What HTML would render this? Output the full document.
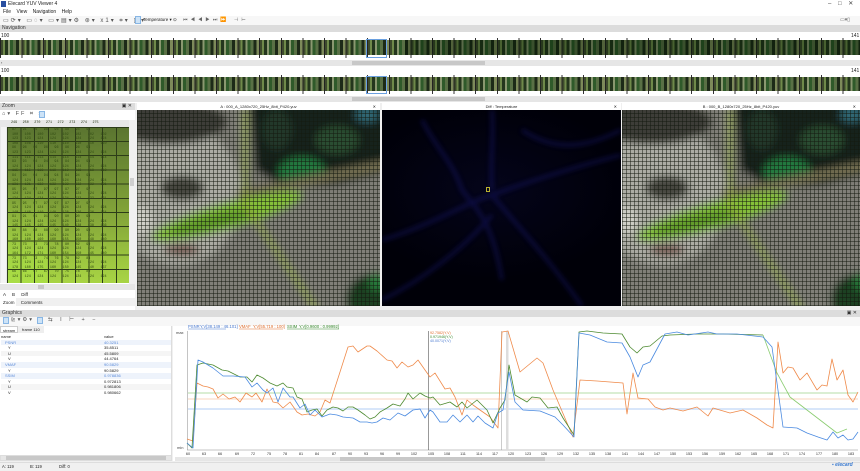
<!DOCTYPE html>
<html><head><meta charset="utf-8"><style>
*{margin:0;padding:0;box-sizing:border-box}
body{width:860px;height:471px;overflow:hidden;background:#f0f0f0;font-family:"Liberation Sans",sans-serif;font-size:5px;color:#222;position:relative}
.a{position:absolute}
.hdr{background:#dcdcdc;color:#333;font-size:5px;line-height:7px;padding-left:2px}
.film{background:
 repeating-linear-gradient(90deg,#222 0 1px,transparent 1px 21.6px),
 repeating-linear-gradient(90deg,#3d4a2c 0 3px,#6f8a4a 3px 5px,#24361d 5px 8px,#8a9870 8px 10px,#2f5a2a 10px 13px,#597045 13px 16px,#1d2a18 16px 19px,#7d8a5a 19px 21.6px)}
.sb{background:#e6e6e6}
.thumb{background:#c8c8c8}
.grid{background-image:repeating-linear-gradient(90deg,rgba(20,25,15,.5) 0 1px,transparent 1px 4px),repeating-linear-gradient(0deg,rgba(20,25,15,.5) 0 1px,transparent 1px 4px)}
.tbl{font-size:3.4px;line-height:4.6px;color:#203010;white-space:pre;font-family:"Liberation Mono",monospace}
</style></head><body>
<svg width="0" height="0" style="position:absolute"><defs>
<filter id="bl" x="-10%" y="-10%" width="120%" height="120%"><feGaussianBlur stdDeviation="4"/></filter>
<filter id="bl2"><feGaussianBlur stdDeviation="2.5"/></filter>
<g id="scene">
<rect x="-20" y="-20" width="290" height="240" fill="#807f78"/>
<ellipse cx="40" cy="85" rx="65" ry="70" fill="#acaca4"/>
<ellipse cx="30" cy="12" rx="60" ry="22" fill="#3e3e38"/>
<ellipse cx="45" cy="78" rx="22" ry="12" fill="#46463f"/>
<ellipse cx="45" cy="140" rx="18" ry="6" fill="#7a5e56"/>
<ellipse cx="5" cy="110" rx="10" ry="14" fill="#d0d0c8"/>
<polygon points="112,-10 260,-10 260,60 200,75 150,78 118,60" fill="#16241a"/>
<ellipse cx="165" cy="62" rx="24" ry="15" fill="#247a40"/>
<ellipse cx="200" cy="30" rx="22" ry="14" fill="#294e33"/>
<ellipse cx="230" cy="5" rx="12" ry="7" fill="#336a78"/>
<ellipse cx="140" cy="20" rx="15" ry="20" fill="#22382a"/>
<line x1="100" y1="85" x2="250" y2="55" stroke="#7a7456" stroke-width="10"/>
<ellipse cx="90" cy="106" rx="78" ry="13" fill="#84c038" transform="rotate(-16 90 106)"/>
<ellipse cx="75" cy="112" rx="45" ry="7" fill="#5f9a2c" transform="rotate(-14 75 112)"/>
<path d="M108 0 L108 95 L180 200" stroke="#98ae3c" stroke-width="4" fill="none"/>
<ellipse cx="235" cy="190" rx="26" ry="26" fill="#1a4024"/>
<ellipse cx="240" cy="172" rx="9" ry="9" fill="#287a3a"/>
</g></defs></svg>
<!-- title -->
<div class="a" style="left:0;top:0;width:860px;height:8px;background:#fff"></div>
<div class="a" style="left:1px;top:1px;width:5px;height:6px;background:#2a4fa0"></div>
<div class="a" style="left:8px;top:1px;font-size:5px">Elecard YUV Viewer 4</div>
<div class="a" style="left:828px;top:0;font-size:6px;color:#444">–&nbsp;&nbsp;&nbsp;&nbsp;□&nbsp;&nbsp;&nbsp;&nbsp;✕</div>
<div class="a" style="left:0;top:8px;width:860px;height:8px;background:#fff"></div>
<div class="a" style="left:3px;top:9px;font-size:5px;word-spacing:4px">File View Navigation Help</div>
<!-- toolbar -->
<div class="a" style="left:0;top:16px;width:860px;height:9px;background:#f7f7f7"></div>
<div class="a" style="left:3px;top:17px;font-size:6px;color:#555;letter-spacing:2px">▭⟳▾ ▭◌▾ ▭▾▤▾⚙ ⊛▾ x1▾ ⌗▾ ◫▾</div>
<div class="a" style="left:135px;top:16px;width:6px;height:8px;background:#cde3f7;border:1px solid #88b6e4"></div>
<div class="a" style="left:143px;top:17px;font-size:4.5px">Temperature ▾ ⊙</div>
<div class="a" style="left:183px;top:17px;font-size:5px;color:#666;letter-spacing:3px">⏮◀◀▶⏭⏩ ⊣⊢</div>
<div class="a" style="left:840px;top:17px;font-size:5px;color:#666">▭▾▯</div>
<!-- navigation -->
<div class="a hdr" style="left:0;top:25px;width:860px;height:7px">Navigation</div>
<div class="a" style="left:0;top:32px;width:860px;height:71px;background:#fff"></div>
<div class="a" style="left:1px;top:33px">100</div><div class="a" style="left:851px;top:33px">141</div>
<div class="a film" style="left:0;top:40px;width:860px;height:15px"></div>
<div class="a" style="left:0;top:38px;width:860px;height:2px;background:repeating-linear-gradient(90deg,#333 0 1px,#fff 1px 21.6px)"></div>
<div class="a" style="left:0;top:55px;width:860px;height:3px;background:repeating-linear-gradient(90deg,#333 0 1px,#fff 1px 21.6px)"></div>
<div class="a" style="left:405px;top:40px;width:455px;height:15px;background:rgba(0,20,0,.35)"></div>
<div class="a" style="left:366px;top:39px;width:21px;height:19px;border:1px solid #6aa0e0"></div>
<div class="a sb" style="left:0;top:60px;width:860px;height:6px"></div>
<div class="a thumb" style="left:352px;top:61px;width:133px;height:4px"></div>
<div class="a" style="left:1px;top:60px;font-size:4px">‹</div>
<div class="a" style="left:1px;top:68px">100</div><div class="a" style="left:851px;top:68px">141</div>
<div class="a film" style="left:0;top:77px;width:860px;height:14px"></div>
<div class="a" style="left:0;top:75px;width:860px;height:2px;background:repeating-linear-gradient(90deg,#333 0 1px,#fff 1px 21.6px)"></div>
<div class="a" style="left:0;top:91px;width:860px;height:3px;background:repeating-linear-gradient(90deg,#333 0 1px,#fff 1px 21.6px)"></div>
<div class="a" style="left:366px;top:76px;width:21px;height:18px;border:1px solid #6aa0e0"></div>
<div class="a sb" style="left:0;top:96px;width:860px;height:6px"></div>
<div class="a thumb" style="left:352px;top:97px;width:133px;height:4px"></div>
<!-- zoom panel -->
<div class="a hdr" style="left:0;top:103px;width:135px;height:7px">Zoom<span style="position:absolute;right:3px">▣ ✕</span></div>
<div class="a" style="left:0;top:110px;width:135px;height:200px;background:#fff"></div>
<div class="a" style="left:2px;top:111px;font-size:5.5px;color:#555;letter-spacing:2px">⌂▾ FF ⌗ ⇆</div>
<div class="a" style="left:39px;top:111px;width:6px;height:7px;background:#cde3f7;border:1px solid #88b6e4"></div>
<div class="a" style="left:0;top:120px;width:130px;height:163px;background:#e8e8e8"></div>
<div class="a" style="left:7px;top:127px;width:122px;height:156px;background:linear-gradient(180deg,#5a7430 0%,#6f8e34 30%,#86a83a 60%,#9cc640 85%,#a8d444 100%)"></div>
<div class="a" style="left:7px;top:183px;width:40px;height:100px;background:linear-gradient(180deg,rgba(170,220,70,0) 0%,rgba(170,225,70,.7) 100%)"></div>
<div class="a" style="left:7px;top:127px;width:122px;height:156px;background-image:repeating-linear-gradient(90deg,#2d3d18 0 1px,transparent 1px 13.6px),repeating-linear-gradient(0deg,transparent 0 13.2px,#2d3d18 13.2px 14.2px)"></div>
<div class="a tbl" style="left:11px;top:121px;word-spacing:3.5px">249 250 270 271 272 273 274 275</div>
<div class="a tbl" style="left:12px;top:128px;color:#304a12;word-spacing:4.5px">87 91 96 98 96 98 94 93
100 100 100 102 102 102 102 102
123 123 124 124 124 124 124 124
108 108 110 110 110 110 110 110
96 96 96 96 96 96 96 96
123 123 124 124 124 124 124 124
111 111 113 114 114 114 114 114
93 93 94 94 94 94 94 94
124 124 124 124 124 124 124 124
115 115 118 118 118 118 118 118
94 94 94 94 94 94 94 94
124 124 124 124 124 124 124 124
131 131 132 132 132 132 132 131
95 95 97 97 97 97 97 97
124 124 124 124 124 124 124 124
134 134 134 134 134 133 133 131
95 95 97 97 97 97 97 97
124 124 124 124 124 124 124 124
140 140 140 140 138 136 136 134
91 91 91 91 90 90 90 90
124 124 124 124 124 124 124 124
145 145 145 145 140 138 138 136
88 88 88 88 90 90 90 90
124 124 124 124 124 124 124 124
160 160 160 160 155 150 148 140
73 73 73 73 78 80 82 90
124 124 124 124 124 124 124 124
164 172 171 160 154 150 145 140
73 73 73 74 76 78 82 88
124 124 124 124 124 124 124 124
178 180 175 160 150 145 140 137
66 66 67 67 70 75 78 80
124 124 124 124 124 124 124 124</div>
<div class="a" style="left:1px;top:127px;width:5px;height:156px;background:#f4f4f4"></div>
<div class="a" style="left:129px;top:120px;width:6px;height:164px;background:#f0f0f0"></div>
<div class="a" style="left:130px;top:178px;width:4px;height:8px;background:#cfcfcf"></div>
<div class="a sb" style="left:0;top:284px;width:135px;height:6px"></div>
<div class="a thumb" style="left:38px;top:285px;width:6px;height:4px"></div>
<div class="a" style="left:3px;top:292px;font-size:4.5px;word-spacing:5px">A B Diff</div>
<div class="a" style="left:0;top:298px;width:135px;height:8px;background:#f0f0f0"></div>
<div class="a" style="left:0;top:298px;width:16px;height:8px;background:#fff"></div>
<div class="a" style="left:3px;top:300px;font-size:4.5px">Zoom&nbsp;&nbsp;&nbsp;&nbsp;&nbsp;Comments</div>
<!-- view A -->
<div class="a" style="left:137px;top:103px;width:243px;height:7px;background:#fff;text-align:center;font-size:4px;line-height:7px">A : 000_A_1280x720_25Hz_8bit_P420.yuv<span style="position:absolute;right:4px">✕</span></div>
<div class="a" style="left:137px;top:110px;width:243px;height:196px;overflow:hidden">
<svg width="243" height="196"><g filter="url(#bl)"><use href="#scene"/></g></svg>
<div class="a grid" style="left:0;top:0;width:243px;height:196px"></div>
</div>
<!-- diff -->
<div class="a" style="left:382px;top:103px;width:239px;height:7px;background:#fff;text-align:center;font-size:4px;line-height:7px">Diff : Temperature<span style="position:absolute;right:4px">✕</span></div>
<div class="a" style="left:382px;top:110px;width:239px;height:196px;overflow:hidden;background:radial-gradient(ellipse 140px 90px at 110px 80px,#04041a 0,#000008 100%)">
<svg width="239" height="196" style="position:absolute;left:0;top:0">
<g fill="none" stroke="#1a1a88" stroke-width="4" opacity=".35" filter="url(#bl2)">
<path d="M40 10 C55 40 70 50 80 80 C95 100 110 110 120 170"/>
<path d="M0 130 C50 115 90 90 110 85 C150 70 200 55 239 45"/>
<path d="M110 85 C130 110 160 140 200 196"/>
<path d="M0 190 C40 170 80 140 110 105"/>
<path d="M110 0 C112 30 108 50 110 80"/>
<path d="M140 20 C170 40 200 40 239 20"/>
</g></svg>
<div class="a" style="left:104px;top:77px;width:4px;height:5px;border:1px solid #b8b030"></div>
</div>
<!-- view B -->
<div class="a" style="left:622px;top:103px;width:238px;height:7px;background:#fff;text-align:center;font-size:4px;line-height:7px">B : 000_B_1280x720_25Hz_8bit_P420.yuv<span style="position:absolute;right:4px">✕</span></div>
<div class="a" style="left:622px;top:110px;width:238px;height:196px;overflow:hidden">
<svg width="238" height="196"><g filter="url(#bl)"><use href="#scene"/></g></svg>
<div class="a grid" style="left:0;top:0;width:238px;height:196px"></div>
</div>
<!-- graphics -->
<div class="a hdr" style="left:0;top:310px;width:860px;height:7px">Graphics<span style="position:absolute;right:3px">▣ ✕</span></div>
<div class="a" style="left:0;top:317px;width:860px;height:9px;background:#f7f7f7"></div>
<div class="a" style="left:3px;top:317px;width:6px;height:7px;background:#cde3f7;border:1px solid #88b6e4"></div>
<div class="a" style="left:11px;top:317px;font-size:5.5px;color:#555;letter-spacing:2px">⊵▾⚙▾</div>
<div class="a" style="left:37px;top:317px;width:6px;height:7px;background:#cde3f7;border:1px solid #88b6e4"></div>
<div class="a" style="left:48px;top:317px;font-size:5.5px;color:#555;letter-spacing:3px">⇆ I ⊢ + −</div>
<!-- left list -->
<div class="a" style="left:0;top:326px;width:172px;height:135px;background:#fff;border-right:1px solid #ddd"></div>
<div class="a" style="left:0;top:326px;width:18px;height:7px;background:#fff;border:1px solid #ccc;font-size:4px;padding:1px 2px">stream</div>
<div class="a" style="left:18px;top:326px;width:26px;height:7px;background:#eee;font-size:4px;padding:1px 4px">frame 110</div>
<div class="a" style="left:1px;top:334px;width:170px;height:110px;font-size:4px;line-height:5.6px">
<div style="position:relative;height:5.6px">name<span class="a" style="left:103px">value</span></div>
<div style="position:relative;height:5.6px;color:#5a8ad8;background:#eef3fb;padding-left:4px">PSNR<span class="a" style="left:103px">40.3251</span></div>
<div style="position:relative;height:5.6px;padding-left:7px">Y<span class="a" style="left:103px">35.8511</span></div>
<div style="position:relative;height:5.6px;padding-left:7px;background:#f5f5f5">U<span class="a" style="left:103px">45.5809</span></div>
<div style="position:relative;height:5.6px;padding-left:7px">V<span class="a" style="left:103px">44.4764</span></div>
<div style="position:relative;height:5.6px;color:#5a8ad8;background:#eef3fb;padding-left:4px">VMAF<span class="a" style="left:103px">90.5829</span></div>
<div style="position:relative;height:5.6px;padding-left:7px">Y<span class="a" style="left:103px">90.5829</span></div>
<div style="position:relative;height:5.6px;color:#5a8ad8;background:#eef3fb;padding-left:4px">SSIM<span class="a" style="left:103px">0.978836</span></div>
<div style="position:relative;height:5.6px;padding-left:7px">Y<span class="a" style="left:103px">0.972813</span></div>
<div style="position:relative;height:5.6px;padding-left:7px;background:#f5f5f5">U<span class="a" style="left:103px">0.981806</span></div>
<div style="position:relative;height:5.6px;padding-left:7px">V<span class="a" style="left:103px">0.980662</span></div>
</div>
<div class="a sb" style="left:0;top:455px;width:172px;height:6px;border:1px solid #ddd"></div>
<div class="a thumb" style="left:6px;top:456px;width:160px;height:4px"></div>
<!-- chart -->
<div class="a" style="left:173px;top:326px;width:687px;height:135px;background:#fff"></div>
<svg class="a" style="left:0;top:0" width="860" height="471">
<g font-family="Liberation Sans" font-size="4.2">
<text x="188" y="328" fill="#4a7ad0">PSNR</text><text x="200" y="328" fill="#4a7ad0">Y,V[38.149 : 46.101]</text>
<text x="239" y="328" fill="#e07030">VMAF</text><text x="253" y="328" fill="#e07030">Y,V[55.719 : 100]</text>
<text x="287" y="328" fill="#3a8a30">SSIM</text><text x="299" y="328" fill="#3a8a30">Y,V[0.9600 : 0.99992]</text>
</g>
<g stroke-width=".6"><line x1="188" y1="329" x2="226" y2="329" stroke="#4a7ad0"/><line x1="239" y1="329" x2="283" y2="329" stroke="#e07030"/><line x1="287" y1="329" x2="339" y2="329" stroke="#3a8a30"/></g>
<text x="176" y="334" font-size="4" fill="#444" font-family="Liberation Sans">max</text>
<text x="177" y="449" font-size="4" fill="#444" font-family="Liberation Sans">min</text>
<line x1="187.5" y1="331" x2="187.5" y2="450" stroke="#888" stroke-width=".5"/>
<line x1="187" y1="450" x2="858" y2="450" stroke="#888" stroke-width=".5"/>
<line x1="188" y1="409" x2="858" y2="409" stroke="#d8e6fa" stroke-width="2"/>
<line x1="188" y1="399" x2="858" y2="399" stroke="#f6c9a8" stroke-width=".7"/>
<line x1="188" y1="393" x2="858" y2="393" stroke="#9cd08a" stroke-width=".7"/>
<line x1="428.5" y1="331" x2="428.5" y2="450" stroke="#555" stroke-width=".6"/>
<line x1="501.5" y1="331" x2="501.5" y2="450" stroke="#999" stroke-width=".5"/>
<rect x="506" y="331" width="2.5" height="119" fill="#ddd"/>
<g fill="none" stroke-width=".8" stroke-linejoin="round">
<polyline stroke="#ef8a4a" points="187,439 193,441 197,383 203,386 208,387 213,389 218,398 223,394 229,399 235,397 240,402 246,393 252,397 256,393 262,402 267,389 273,402 278,403 283,408 290,402 297,412 302,415 308,414 315,416 320,412 325,400 330,403 340,372 348,347 353,346 358,352 367,346 370,346 377,351 387,360 392,361 397,368 402,362 408,367 413,365 418,360 425,370 430,377 435,373 445,389 450,388 455,397 462,415 467,400 473,405 480,410 490,417 498,428 502,332 508,331 520,372 537,358 543,363 553,390 573,437 580,380 597,381 623,383 627,414 633,373 638,398 648,399 655,407 663,410 670,408 683,411 697,407 708,416 713,408 730,413 743,410 757,418 767,425 773,428 778,342 783,373 788,367 793,368 800,380 807,373 817,390 822,385 827,386 832,359 837,380 843,370 848,395 853,402 858,392"/>
<polyline stroke="#4d8a30" points="187,443 192,448 197,365 203,363 213,365 222,370 228,371 240,377 247,377 252,382 257,375 263,378 270,383 277,386 283,383 287,387 293,388 297,397 302,399 307,412 312,410 317,409 322,416 327,410 333,407 338,408 343,411 348,407 353,407 358,410 365,415 370,419 375,417 380,412 387,408 393,404 400,406 405,399 408,393 413,399 420,393 425,396 430,398 433,397 440,405 450,402 457,407 462,402 467,408 477,400 487,410 493,423 500,408 505,400 509,365 515,395 527,402 532,397 540,398 548,408 557,407 563,418 574,435 579,332 587,331 603,333 622,334 630,347 637,353 643,347 650,346 662,336 670,335 697,334 723,334 763,335"/>
<polyline stroke="#8acc70" points="763,335 777,373 790,397 837,433 847,429"/>
<polyline stroke="#4a8ae0" points="187,443 193,448 198,360 203,362 213,368 223,376 233,376 245,377 252,387 257,383 263,390 267,393 273,388 278,402 283,388 290,397 293,397 300,408 305,404 310,415 315,410 322,417 330,414 337,415 343,417 353,418 360,422 367,422 372,423 377,422 383,418 390,420 398,413 405,416 413,410 420,409 425,418 430,410 433,412 440,422 447,422 453,415 460,422 467,415 473,422 478,416 485,423 493,428 498,413 503,410 509,372 515,402 523,410 540,411 555,417 563,425 574,437 579,333 590,335 607,342 622,343 630,357 638,377 643,365 650,362 665,334 677,332 688,335 708,332 717,334 737,334 763,337 772,347 777,383 783,427 797,428 807,433 818,437 827,440 833,432 838,438 843,435 848,440 853,439 858,432"/>
</g>
<g font-family="Liberation Sans" font-size="3.6"><text x="430" y="334" fill="#e07030">92.7582(Y,V)</text><text x="430" y="338" fill="#3a8a30">0.971946(Y,V)</text><text x="430" y="342" fill="#4a7ad0">40.0071(Y,V)</text></g>
<g font-family="Liberation Sans" font-size="3.8" fill="#333" text-anchor="middle">
<text x="188" y="455">60</text><text x="204" y="455">63</text><text x="220" y="455">66</text><text x="237" y="455">69</text><text x="253" y="455">72</text><text x="269" y="455">75</text><text x="285" y="455">78</text><text x="301" y="455">81</text><text x="317" y="455">84</text><text x="334" y="455">87</text><text x="350" y="455">90</text><text x="366" y="455">93</text><text x="382" y="455">96</text><text x="398" y="455">99</text><text x="414" y="455">102</text><text x="431" y="455">105</text><text x="447" y="455">108</text><text x="463" y="455">111</text><text x="479" y="455">114</text><text x="495" y="455">117</text><text x="511" y="455">120</text><text x="528" y="455">123</text><text x="544" y="455">126</text><text x="560" y="455">129</text><text x="576" y="455">132</text><text x="592" y="455">135</text><text x="608" y="455">138</text><text x="625" y="455">141</text><text x="641" y="455">144</text><text x="657" y="455">147</text><text x="673" y="455">150</text><text x="689" y="455">153</text><text x="705" y="455">156</text><text x="722" y="455">159</text><text x="738" y="455">162</text><text x="754" y="455">165</text><text x="770" y="455">168</text><text x="786" y="455">171</text><text x="802" y="455">174</text><text x="819" y="455">177</text><text x="835" y="455">180</text><text x="851" y="455">183</text>
</g>
</svg>
<div class="a sb" style="left:175px;top:457px;width:685px;height:4px"></div>
<div class="a thumb" style="left:340px;top:457px;width:205px;height:4px"></div>
<!-- status -->
<div class="a" style="left:0;top:462px;width:860px;height:9px;background:#f0f0f0;border-top:1px solid #ddd"></div>
<div class="a" style="left:2px;top:464px;font-size:4.2px">A: 119</div>
<div class="a" style="left:30px;top:464px;font-size:4.2px">B: 119</div>
<div class="a" style="left:59px;top:464px;font-size:4.2px">Diff: 0</div>
<div class="a" style="left:832px;top:462px;font-size:5px;color:#3a7ad0;font-style:italic;font-weight:bold">▪ elecard</div>
</body></html>
